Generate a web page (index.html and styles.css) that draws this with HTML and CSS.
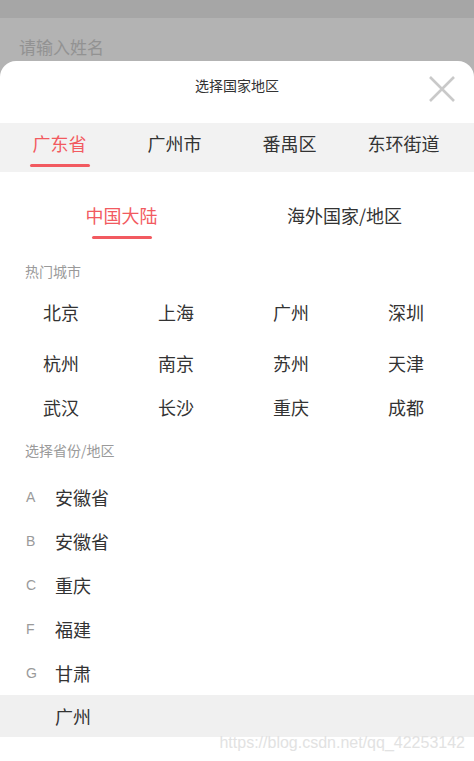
FILE: index.html
```html
<!DOCTYPE html>
<html lang="zh-CN">
  <head>
    <meta charset="UTF-8" />
    <meta name="viewport" content="width=device-width, initial-scale=1.0" />
    <title>选择国家地区</title>
    <link rel="stylesheet" href="styles.css">
  </head>
  <body>
    <div class="page-top"></div>
    <div class="name-field">请输入姓名</div>

    <div class="sheet">
      <div class="sheet-title">
        选择国家地区
        <svg class="close" width="26" height="26" viewBox="0 0 26 26">
          <path d="M1 1 L25 25 M25 1 L1 25" stroke="#c9c9c9" stroke-width="2.6" fill="none" />
        </svg>
      </div>

      <div class="crumbs">
        <div class="crumb active">广东省</div>
        <div class="crumb">广州市</div>
        <div class="crumb">番禺区</div>
        <div class="crumb">东环街道</div>
      </div>

      <div class="region-tabs">
        <div class="region active">中国大陆</div>
        <div class="region">海外国家/地区</div>
      </div>

      <div class="label hot-label">热门城市</div>
      <div class="cities">
        <div class="city-row first">
          <span>北京</span><span>上海</span><span>广州</span><span>深圳</span>
        </div>
        <div class="city-row">
          <span>杭州</span><span>南京</span><span>苏州</span><span>天津</span>
        </div>
        <div class="city-row">
          <span>武汉</span><span>长沙</span><span>重庆</span><span>成都</span>
        </div>
      </div>

      <div class="label prov-label">选择省份/地区</div>
      <ul class="provinces">
        <li><span class="letter">A</span>安徽省</li>
        <li><span class="letter">B</span>安徽省</li>
        <li><span class="letter">C</span>重庆</li>
        <li><span class="letter">F</span>福建</li>
        <li><span class="letter">G</span>甘肃</li>
        <li class="selected"><span class="letter"></span>广州</li>
      </ul>
    </div>

    <div class="watermark">https://blog.csdn.net/qq_42253142</div>
  </body>
</html>
```

FILE: styles.css
```css
html,
body {
  margin: 0;
  padding: 0;
}

body {
  position: relative;
  height: 761px;
  overflow: hidden;
  background-color: #b3b3b3;
  font-family: "Noto Sans CJK SC", "Noto Sans", sans-serif;
  color: #333;
}

.page-top {
  height: 18px;
  background-color: #a6a6a6;
}

.name-field {
  height: 43px;
  box-sizing: border-box;
  padding: 18px 0 0 19px;
  font-size: 17px;
  line-height: 22px;
  color: #929292;
}

.sheet {
  height: 700px;
  background-color: #fff;
  border-radius: 16px 16px 0 0;
}

.sheet-title {
  position: relative;
  height: 62px;
  box-sizing: border-box;
  padding-top: 14px;
  font-size: 14px;
  line-height: 20px;
  text-align: center;
}

.close {
  position: absolute;
  top: 15px;
  right: 19px;
}

.crumbs {
  display: grid;
  grid-template-columns: repeat(3, 115px) 1fr;
  height: 49px;
  padding: 0 14px 0 2px;
  background-color: #f2f2f2;
}

.crumb,
.region {
  display: flex;
  flex-direction: column;
  align-items: center;
  font-size: 18px;
  line-height: 22px;
}

.crumb {
  padding-top: 9px;
}

.crumb::after,
.region::after {
  content: "";
  width: 60px;
  height: 3px;
  margin-top: 10px;
  border-radius: 2px;
}

.crumb.active,
.region.active {
  color: #f25a60;
}

.crumb.active::after,
.region.active::after {
  background-color: #f25a60;
}

.region-tabs {
  display: grid;
  grid-template-columns: 1fr 1fr;
  padding: 32px 18px 0 10px;
}

.label {
  padding-left: 25px;
  font-size: 14px;
  line-height: 20px;
  color: #9a9a9a;
}

.hot-label {
  margin-top: 22px;
}

.cities {
  display: flex;
  flex-direction: column;
  gap: 22px;
  margin: 20px 0 22px;
}

.city-row {
  display: grid;
  grid-template-columns: repeat(3, 115px) 1fr;
  padding-left: 43px;
  font-size: 18px;
  line-height: 22px;
}

.city-row.first {
  margin-bottom: 7px;
}

.provinces {
  list-style: none;
  margin: 15px 0 0;
  padding: 0;
}

.provinces li {
  display: flex;
  align-items: center;
  height: 44px;
  padding-left: 26px;
  font-size: 18px;
}

.provinces li.selected {
  height: 42px;
  background-color: #f0f0f0;
}

.letter {
  width: 29px;
  font-family: "Liberation Sans", Arial, sans-serif;
  font-size: 14px;
  color: #9a9a9a;
}

.watermark {
  position: absolute;
  right: 9px;
  bottom: 8px;
  font-family: "Liberation Sans", Arial, sans-serif;
  font-size: 16px;
  line-height: 20px;
  color: #e2e2e2;
}
```
